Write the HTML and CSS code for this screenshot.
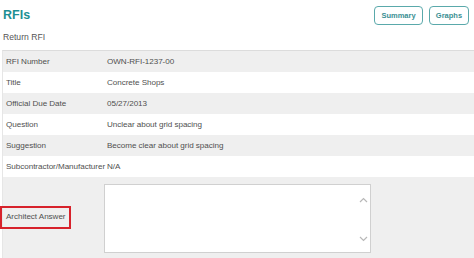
FILE: index.html
```html
<!DOCTYPE html>
<html>
<head>
<meta charset="utf-8">
<link rel="stylesheet" href="styles.css">
</head>
<body>
<div class="page">
  <div class="header">
    <div class="titles">
      <div class="title">RFIs</div>
      <div class="subtitle">Return RFI</div>
    </div>
    <div class="actions">
      <span class="btn btn-summary">Summary</span>
      <span class="btn btn-graphs">Graphs</span>
    </div>
  </div>
  <div class="table">
    <div class="row grey"><div class="label">RFI Number</div><div class="value">OWN-RFI-1237-00</div></div>
    <div class="row"><div class="label">Title</div><div class="value">Concrete Shops</div></div>
    <div class="row grey"><div class="label">Official Due Date</div><div class="value">05/27/2013</div></div>
    <div class="row"><div class="label">Question</div><div class="value">Unclear about grid spacing</div></div>
    <div class="row grey"><div class="label">Suggestion</div><div class="value">Become clear about grid spacing</div></div>
    <div class="row"><div class="label">Subcontractor/Manufacturer</div><div class="value">N/A</div></div>
    <div class="row grey answer">
      <div class="label"><span class="highlight">Architect Answer</span></div>
      <div class="value">
        <div class="textbox">
          <svg class="arrow arrow-up" width="9" height="6" viewBox="0 0 9 6"><path d="M1 5 L4.5 1.5 L8 5" fill="none" stroke="#b8b8b8" stroke-width="1.2"/></svg>
          <svg class="arrow arrow-down" width="9" height="6" viewBox="0 0 9 6"><path d="M1 1 L4.5 4.5 L8 1" fill="none" stroke="#b8b8b8" stroke-width="1.2"/></svg>
        </div>
      </div>
    </div>
  </div>
</div>
</body>
</html>
```

FILE: styles.css
```css
html, body {
  margin: 0;
  padding: 0;
  background: #ffffff;
}
body {
  font-family: "Liberation Sans", Arial, sans-serif;
  color: #4a4a4a;
  width: 474px;
  height: 258px;
  overflow: hidden;
}
.page {
  width: 474px;
}
.header {
  display: flex;
  justify-content: space-between;
  align-items: flex-start;
  height: 50px;
}
.titles {
  padding-left: 3px;
}
.title {
  padding-top: 8px;
  font-size: 12.5px;
  line-height: 14px;
  font-weight: bold;
  color: #1d8f93;
}
.subtitle {
  margin-top: 10px;
  font-size: 8.6px;
  line-height: 10px;
  color: #555555;
}
.actions {
  display: flex;
  gap: 6px;
  margin-top: 6px;
  margin-right: 5px;
}
.btn {
  display: flex;
  align-items: center;
  justify-content: center;
  height: 17px;
  border: 1px solid #5aa9ab;
  border-radius: 4px;
  font-size: 7.5px;
  font-weight: bold;
  color: #3a8f93;
  background: #ffffff;
}
.btn-summary {
  width: 47px;
}
.btn-graphs {
  width: 38px;
}
.table {
  margin-left: 2px;
  border-top: 1px solid #dcdcdc;
  border-left: 1px solid #e6e6e6;
}
.row {
  display: flex;
  align-items: center;
  height: 21px;
  background: #ffffff;
  font-size: 8.1px;
  letter-spacing: -0.05px;
  color: #505050;
}
.row.grey {
  background: #efefef;
}
.label {
  width: 101px;
  padding-left: 3px;
  white-space: nowrap;
}
.value {
  flex: 1;
  white-space: nowrap;
}
.row.answer {
  height: 81px;
  align-items: flex-start;
}
.row.answer .label {
  align-self: center;
  margin-left: -3px;
  padding-left: 0;
  width: 104px;
  margin-top: -1px;
}
.highlight {
  display: inline-block;
  border: 2px solid #d7222b;
  padding: 4px 4px 5px 4px;
  line-height: 10px;
}
.row.answer .value {
  padding-top: 7px;
}
.textbox {
  position: relative;
  width: 265px;
  height: 67px;
  background: #ffffff;
  border: 1px solid #d0d0d0;
}
.arrow {
  position: absolute;
  right: 2px;
}
.arrow-up {
  top: 12px;
}
.arrow-down {
  top: 51px;
}
```
